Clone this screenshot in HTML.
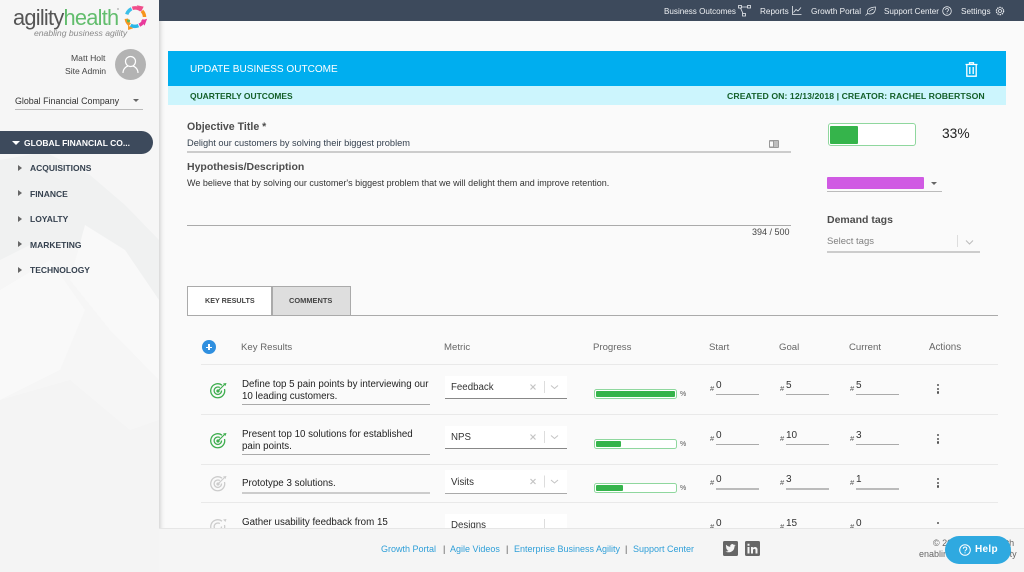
<!DOCTYPE html>
<html><head><meta charset="utf-8"><title>Update Business Outcome</title>
<style>
*{box-sizing:border-box}
html,body{margin:0;padding:0}
body{width:1024px;height:572px;overflow:hidden;position:relative;background:#fafafa;font-family:"Liberation Sans",sans-serif;color:#333}
.t{position:absolute;white-space:nowrap;line-height:1}
.a{position:absolute}
svg{position:absolute;overflow:visible}
.nav{font-size:8.2px;color:#eef0f3;top:7.5px}
.side{font-size:8.5px;font-weight:bold;color:#35414f;left:30px}
.tri{position:absolute;left:18px;width:0;height:0;border-left:4px solid #666;border-top:3.5px solid transparent;border-bottom:3.5px solid transparent}
.h{font-size:9.6px;color:#666;top:342.5px}
.sep{position:absolute;left:201px;width:797px;height:1px;background:#e9e9e9}
.kr{font-size:9.75px;color:#222;left:242px;line-height:12px;position:absolute;white-space:nowrap}
.ul{position:absolute;height:1px;background:#aaa}
.sel{position:absolute;left:445px;width:122px;background:#fff;border-bottom:1px solid #888}
.sel span{position:absolute;left:6px;font-size:9.7px;color:#333;white-space:nowrap;line-height:1}
.bar{position:absolute;left:594px;width:83px;height:9.5px;border:1px solid #8fd79e;border-radius:2.5px;background:#fff}
.bar i{position:absolute;left:1px;top:1px;bottom:1px;background:#35b44b;border-radius:1px}
.pc{font-size:7px;color:#555;left:680px}
.hash{font-size:7.5px;color:#555}
.num{font-size:10px;color:#333}
.dots{position:absolute;left:937px;width:3px}
.dots i{display:block;width:2.4px;height:2.4px;background:#555;border-radius:50%;margin-bottom:1.3px}
.fl{font-size:9px;color:#2f9fd8;top:545px}
.fs{font-size:9px;color:#555;top:545px}
</style></head><body>

<!-- Sidebar -->
<div class="a" style="left:0;top:0;width:159px;height:572px;background:#f6f6f6;box-shadow:1px 0 5px rgba(0,0,0,.2);overflow:hidden">
<svg width="159" height="572" style="left:0;top:0">
<polygon points="0,160 45,152 90,175 125,205 159,240 159,300 100,250 40,240 0,260" fill="#f0f1f1"/>
<polygon points="85,225 125,250 159,300 159,380 110,330 70,280" fill="#f9f9f9"/>
<polygon points="0,290 50,260 85,310 60,370 0,400" fill="#f9f9f9"/>
<polygon points="0,400 70,380 130,430 159,420 159,572 0,572" fill="#f4f4f4"/>
</svg>
</div>

<!-- Logo -->
<div class="t" style="left:13px;top:5.5px;font-size:21.8px;letter-spacing:-.75px;color:#555;line-height:24px">agility<span style="color:#62bd6d">health</span></div>
<div class="a" style="left:117px;top:8px;width:2px;height:2px;border-radius:50%;background:#bbb"></div>
<div class="t" style="left:34px;top:28.5px;font-size:8.6px;font-style:italic;color:#888">enabling business agility</div>
<svg width="26" height="26" viewBox="0 0 30 30" style="left:122px;top:4px" fill="none" stroke-width="4">
<path d="M5.5 12 A10.5 10.5 0 0 1 11 5.5" stroke="#3bbfe8"/>
<path d="M12 5 A10.5 10.5 0 0 1 22 7" stroke="#f04e8b"/>
<path d="M23 8 A10.5 10.5 0 0 1 26 15" stroke="#f7941d"/>
<path d="M25.5 18 A10.5 10.5 0 0 1 20 24.5" stroke="#e8399b"/>
<path d="M19 25 A10.5 10.5 0 0 1 10 24.5" stroke="#29b6e8"/>
<path d="M9 24 A10.5 10.5 0 0 1 5 17" stroke="#f7941d"/>
<polygon points="17,1.5 25,3 22,9" fill="#f04e8b" stroke="none"/>
<polygon points="22,19 29,17 26,25" fill="#e8399b" stroke="none"/>
<polygon points="7,25 13,28 7,30" fill="#f7941d" stroke="none"/>
<circle cx="7.5" cy="19.5" r="1.8" fill="#5cb85c" stroke="none"/>
</svg>

<div class="t" style="left:71px;top:54px;font-size:8.6px;color:#444">Matt Holt</div>
<div class="t" style="left:65px;top:67px;font-size:8.6px;color:#444">Site Admin</div>
<div class="a" style="left:115px;top:49px;width:31px;height:31px;border-radius:50%;background:#b3b3b3"></div>
<svg width="31" height="31" viewBox="0 0 31 31" style="left:115px;top:49px" fill="none" stroke="#fff" stroke-width="1.2"><circle cx="15.5" cy="12.5" r="5"/><path d="M8 24c0-4 3-6.500 5-7M23 24c0-4-3-6.500-5-7"/></svg>

<div class="t" style="left:15px;top:97px;font-size:8.9px;color:#333">Global Financial Company</div>
<div class="a" style="left:133px;top:99px;width:0;height:0;border-top:3.5px solid #666;border-left:3.500px solid transparent;border-right:3.500px solid transparent"></div>
<div class="a" style="left:15px;top:109px;width:128px;height:1px;background:#bbb"></div>

<div class="a" style="left:0;top:131px;width:153px;height:23px;background:#3d4a5c;border-radius:0 12px 12px 0"></div>
<div class="a" style="left:12px;top:141px;width:0;height:0;border-top:4px solid #fff;border-left:4px solid transparent;border-right:4px solid transparent"></div>
<div class="t" style="left:24px;top:138.500px;font-size:8.5px;font-weight:bold;color:#fff">GLOBAL FINANCIAL CO...</div>
<div class="tri" style="top:164.500px"></div><div class="t side" style="top:164px">ACQUISITIONS</div>
<div class="tri" style="top:190px"></div><div class="t side" style="top:189.500px">FINANCE</div>
<div class="tri" style="top:215.500px"></div><div class="t side" style="top:215px">LOYALTY</div>
<div class="tri" style="top:241px"></div><div class="t side" style="top:240.500px">MARKETING</div>
<div class="tri" style="top:266.500px"></div><div class="t side" style="top:266px">TECHNOLOGY</div>

<!-- Top bar -->
<div class="a" style="left:159px;top:0;width:865px;height:21px;background:#3d4a5c"></div>
<div class="t nav" style="left:664px;font-size:8.1px">Business Outcomes</div>
<svg width="13" height="12" viewBox="0 0 13 12" style="left:738px;top:5px" fill="none" stroke="#e8ebef" stroke-width=".8"><rect x=".5" y=".5" width="3" height="2.500"/><rect x="9.500" y=".5" width="3" height="2.500"/><rect x="4.500" y="8.500" width="3" height="2.500"/><path d="M3.500 2h6M2.500 3l2.500 5.500"/></svg>
<div class="t nav" style="left:760px">Reports</div>
<svg width="10" height="9" viewBox="0 0 10 9" style="left:792px;top:6px" fill="none" stroke="#e8ebef" stroke-width=".8"><path d="M.5 0v8.500h9M1.500 6.500l2.500-3 2 1.500 3-3.500"/></svg>
<div class="t nav" style="left:811px">Growth Portal</div>
<svg width="11" height="10" viewBox="0 0 11 10" style="left:865px;top:6px" fill="none" stroke="#e8ebef" stroke-width=".7"><path d="M.5 9.500L3 7M2.500 7C1.500 3 5 1.500 10.500 1c0 4-1.500 7-5 7-1.200 0-2.500-.3-3-1zM4 5.500c1.500-1.200 3-2 4.500-2.500"/></svg>
<div class="t nav" style="left:884px;font-size:8.1px">Support Center</div>
<svg width="10" height="10" viewBox="0 0 10 10" style="left:942px;top:6px" fill="none" stroke="#e8ebef" stroke-width=".8"><circle cx="5" cy="5" r="4.300"/><path d="M3.600 3.900c0-2 2.900-1.800 2.900 0 0 1.200-1.500 1.200-1.500 2.300M5 7v.8"/></svg>
<div class="t nav" style="left:961px">Settings</div>
<svg width="10" height="10" viewBox="0 0 10 10" style="left:995px;top:6px" fill="none" stroke="#e8ebef"><circle cx="5" cy="5" r="3.600" stroke-width="1.300" stroke-dasharray="1.500 .8"/><circle cx="5" cy="5" r="1.500" stroke-width=".8"/></svg>

<!-- Header -->
<div class="a" style="left:168px;top:51px;width:838px;height:35px;background:#00aeef"></div>
<div class="t" style="left:190px;top:64.500px;font-size:10.05px;color:#fff">UPDATE BUSINESS OUTCOME</div>
<svg width="13" height="15" viewBox="0 0 13 15" style="left:965px;top:61.500px" fill="none" stroke="#fff" stroke-width="1.300"><path d="M.5 2.500h12M4.500 2.500V.8h4v1.700M1.800 2.500v11.700h9.400V2.500M4.800 5v7M8.200 5v7"/></svg>
<div class="a" style="left:168px;top:86px;width:838px;height:19px;background:#ccf5fd"></div>
<div class="t" style="left:190px;top:91.500px;font-size:8.450px;font-weight:bold;color:#14602a">QUARTERLY OUTCOMES</div>
<div class="t" style="left:727px;top:91.500px;font-size:8.700px;font-weight:bold;color:#14602a;letter-spacing:.07px">CREATED ON: 12/13/2018 | CREATOR: RACHEL ROBERTSON</div>

<!-- Form -->
<div class="t" style="left:187px;top:122px;font-size:10.600px;font-weight:bold;color:#4d4d4d">Objective Title *</div>
<div class="t" style="left:187px;top:138.500px;font-size:9.280px;color:#35414f">Delight our customers by solving their biggest problem</div>
<svg width="10" height="8" viewBox="0 0 10 8" style="left:769px;top:139.500px"><rect width="10" height="8" rx="1" fill="#999"/><rect x="1" y="1.500" width="3" height="5" fill="#fafafa"/><path d="M5 2h4M5 4h4M5 6h4" stroke="#fafafa" stroke-width=".7"/></svg>
<div class="a" style="left:187px;top:151px;width:604px;height:1.500px;background:#ccc"></div>
<div class="t" style="left:187px;top:162px;font-size:10.500px;font-weight:bold;color:#4d4d4d">Hypothesis/Description</div>
<div class="t" style="left:187px;top:179px;font-size:9px;color:#333">We believe that by solving our customer's biggest problem that we will delight them and improve retention.</div>
<div class="a" style="left:187px;top:225px;width:604px;height:1px;background:#aaa"></div>
<div class="t" style="left:752px;top:228px;font-size:9px;color:#444">394 / 500</div>

<div class="a" style="left:828px;top:123px;width:88px;height:23px;border:1px solid #8fd79e;border-radius:3px;background:#fff"></div>
<div class="a" style="left:830px;top:125.500px;width:28px;height:18.500px;background:#35b44b;border-radius:1px"></div>
<div class="t" style="left:942px;top:127px;font-size:13.800px;color:#222">33%</div>
<div class="a" style="left:827px;top:177px;width:97px;height:12px;background:#d05ae3;border-radius:1px"></div>
<div class="a" style="left:931px;top:182px;width:0;height:0;border-top:3.500px solid #666;border-left:3.500px solid transparent;border-right:3.500px solid transparent"></div>
<div class="a" style="left:827px;top:191px;width:115px;height:1px;background:#bbb"></div>
<div class="t" style="left:827px;top:215px;font-size:10.500px;font-weight:bold;color:#4d4d4d">Demand tags</div>
<div class="t" style="left:827px;top:237px;font-size:9.500px;color:#808080">Select tags</div>
<div class="a" style="left:957px;top:235px;width:1px;height:12px;background:#ddd"></div>
<svg width="9" height="5" viewBox="0 0 9 5" style="left:965px;top:240px" fill="none" stroke="#bbb" stroke-width="1"><path d="M1 .5l3.500 3.500L8 .5"/></svg>
<div class="a" style="left:827px;top:251px;width:153px;height:1.500px;background:#ccc"></div>

<!-- Tabs -->
<div class="a" style="left:187px;top:315px;width:811px;height:1px;background:#aaa"></div>
<div class="a" style="left:187px;top:286px;width:85px;height:30px;background:#fff;border:1px solid #aaa"></div>
<div class="t" style="left:205px;top:297px;font-size:7.200px;font-weight:bold;color:#444">KEY RESULTS</div>
<div class="a" style="left:272px;top:286px;width:79px;height:30px;background:#dedede;border:1px solid #aaa"></div>
<div class="t" style="left:289px;top:297px;font-size:7.450px;font-weight:bold;color:#444">COMMENTS</div>

<!-- Table head -->
<div class="a" style="left:202px;top:340px;width:14px;height:14px;border-radius:50%;background:#2f8fdf"></div>
<div class="a" style="left:206px;top:346.500px;width:6px;height:1.300px;background:#fff"></div>
<div class="a" style="left:208.400px;top:344px;width:1.300px;height:6px;background:#fff"></div>
<div class="t h" style="left:241px">Key Results</div>
<div class="t h" style="left:444px">Metric</div>
<div class="t h" style="left:593px">Progress</div>
<div class="t h" style="left:709px">Start</div>
<div class="t h" style="left:779px">Goal</div>
<div class="t h" style="left:849px">Current</div>
<div class="t h" style="left:929px;font-size:9.800px">Actions</div>
<div class="sep" style="top:364px"></div>
<div class="sep" style="top:414px"></div>
<div class="sep" style="top:464px"></div>
<div class="sep" style="top:502px"></div>

<!-- Row 1 -->
<svg width="17" height="17" viewBox="0 0 17 17" style="left:210px;top:381.500px" fill="none" stroke="#3fae4f" stroke-width="1.300"><path d="M12 3.200A7 7 0 1 0 14.500 7"/><path d="M9.800 5.600A3.700 3.700 0 1 0 11.500 8.500"/><circle cx="8" cy="9" r="1" fill="#3fae4f"/><path d="M8 9l7-7" stroke-width="1.200"/><path d="M13 1.500l3.500-.5-1 3z" fill="#3fae4f" stroke="none"/></svg>
<div class="kr" style="top:378.500px">Define top 5 pain points by interviewing our<br>10 leading customers.</div>
<div class="ul" style="left:242px;top:404px;width:188px"></div>
<div class="sel" style="top:376px;height:23px"><span style="top:6.500px">Feedback</span></div>
<div class="bar" style="top:389px"><i style="width:79px"></i></div>
<div class="t pc" style="top:391px">%</div>

<!-- Row 2 -->
<svg width="17" height="17" viewBox="0 0 17 17" style="left:210px;top:431.500px" fill="none" stroke="#3fae4f" stroke-width="1.300"><path d="M12 3.200A7 7 0 1 0 14.500 7"/><path d="M9.800 5.600A3.700 3.700 0 1 0 11.500 8.500"/><circle cx="8" cy="9" r="1" fill="#3fae4f"/><path d="M8 9l7-7" stroke-width="1.200"/><path d="M13 1.500l3.500-.5-1 3z" fill="#3fae4f" stroke="none"/></svg>
<div class="kr" style="top:428.500px">Present top 10 solutions for established<br>pain points.</div>
<div class="ul" style="left:242px;top:454px;width:188px"></div>
<div class="sel" style="top:426px;height:23px"><span style="top:6.500px">NPS</span></div>
<div class="bar" style="top:439px"><i style="width:24.500px"></i></div>
<div class="t pc" style="top:441px">%</div>

<!-- Row 3 -->
<svg width="17" height="17" viewBox="0 0 17 17" style="left:210px;top:475px" fill="none" stroke="#ccc" stroke-width="1.300"><path d="M12 3.200A7 7 0 1 0 14.500 7"/><path d="M9.800 5.600A3.700 3.700 0 1 0 11.500 8.500"/><circle cx="8" cy="9" r="1" fill="#ccc"/><path d="M8 9l7-7" stroke-width="1.200"/><path d="M13 1.500l3.500-.5-1 3z" fill="#ccc" stroke="none"/></svg>
<div class="kr" style="top:478px">Prototype 3 solutions.</div>
<div class="ul" style="left:242px;top:492px;width:188px;height:1.500px;background:#ccc"></div>
<div class="sel" style="top:470px;height:24px;border-bottom:1.500px solid #aaa"><span style="top:7.500px">Visits</span></div>
<div class="bar" style="top:483px"><i style="width:27px"></i></div>
<div class="t pc" style="top:485px">%</div>

<!-- Row 4 -->
<svg width="17" height="17" viewBox="0 0 17 17" style="left:210px;top:518px" fill="none" stroke="#ccc" stroke-width="1.300"><path d="M12 3.200A7 7 0 1 0 14.500 7"/><path d="M9.800 5.600A3.700 3.700 0 1 0 11.500 8.500"/><path d="M13 1.500l3.500-.5-1 3z" fill="#ccc" stroke="none"/></svg>
<div class="kr" style="top:516.500px">Gather usability feedback from 15</div>
<div class="sel" style="top:514px;height:30px;border:0"><span style="top:7px">Designs</span></div>

<!-- X and chevrons for selects -->
<svg width="30" height="160" viewBox="0 0 30 160" style="left:528px;top:376px" fill="none" stroke-width="1">
<g><path d="M2.500 8.500l5 5M7.500 8.500l-5 5" stroke="#c4c4c4" stroke-width="1.200"/><path d="M16.500 5v12" stroke="#ddd"/><path d="M23 9.500l3.500 3 3.500-3" stroke="#c4c4c4"/></g>
<g transform="translate(0,50)"><path d="M2.500 8.500l5 5M7.500 8.500l-5 5" stroke="#c4c4c4" stroke-width="1.200"/><path d="M16.500 5v12" stroke="#ddd"/><path d="M23 9.500l3.500 3 3.500-3" stroke="#c4c4c4"/></g>
<g transform="translate(0,94.500)"><path d="M2.500 8.500l5 5M7.500 8.500l-5 5" stroke="#c4c4c4" stroke-width="1.200"/><path d="M16.500 5v12" stroke="#ddd"/><path d="M23 9.500l3.500 3 3.500-3" stroke="#c4c4c4"/></g>
<g transform="translate(0,138)"><path d="M16.500 5v12" stroke="#ddd"/></g>
</svg>

<!-- Numbers -->
<div class="t hash" style="left:710px;top:385px">#</div><div class="t num" style="left:716px;top:380.500px">0</div><div class="ul" style="left:716px;top:394px;width:43px"></div>
<div class="t hash" style="left:780px;top:385px">#</div><div class="t num" style="left:786px;top:380.500px">5</div><div class="ul" style="left:786px;top:394px;width:43px"></div>
<div class="t hash" style="left:850px;top:385px">#</div><div class="t num" style="left:856px;top:380.500px">5</div><div class="ul" style="left:856px;top:394px;width:43px"></div>
<div class="dots" style="top:384px"><i></i><i></i><i></i></div>

<div class="t hash" style="left:710px;top:435px">#</div><div class="t num" style="left:716px;top:430.500px">0</div><div class="ul" style="left:716px;top:444px;width:43px"></div>
<div class="t hash" style="left:780px;top:435px">#</div><div class="t num" style="left:786px;top:430.500px">10</div><div class="ul" style="left:786px;top:444px;width:43px"></div>
<div class="t hash" style="left:850px;top:435px">#</div><div class="t num" style="left:856px;top:430.500px">3</div><div class="ul" style="left:856px;top:444px;width:43px"></div>
<div class="dots" style="top:434px"><i></i><i></i><i></i></div>

<div class="t hash" style="left:710px;top:479px">#</div><div class="t num" style="left:716px;top:474.500px">0</div><div class="ul" style="left:716px;top:488px;width:43px;height:1.500px;background:#bbb"></div>
<div class="t hash" style="left:780px;top:479px">#</div><div class="t num" style="left:786px;top:474.500px">3</div><div class="ul" style="left:786px;top:488px;width:43px;height:1.500px;background:#bbb"></div>
<div class="t hash" style="left:850px;top:479px">#</div><div class="t num" style="left:856px;top:474.500px">1</div><div class="ul" style="left:856px;top:488px;width:43px;height:1.500px;background:#bbb"></div>
<div class="dots" style="top:478px"><i></i><i></i><i></i></div>

<div class="t num" style="left:716px;top:518.500px">0</div>
<div class="t num" style="left:786px;top:518.500px">15</div>
<div class="t num" style="left:856px;top:518.500px">0</div>
<div class="t hash" style="left:710px;top:523px">#</div>
<div class="t hash" style="left:780px;top:523px">#</div>
<div class="t hash" style="left:850px;top:523px">#</div>
<div class="dots" style="top:522px"><i></i></div>

<!-- Footer -->
<div class="a" style="left:159px;top:528px;width:865px;height:44px;background:#f5f5f5;border-top:1px solid #e6e6e6"></div>
<div class="t fl" style="left:381px">Growth Portal</div>
<div class="t fs" style="left:443px">|</div>
<div class="t fl" style="left:450px">Agile Videos</div>
<div class="t fs" style="left:506px">|</div>
<div class="t fl" style="left:514px">Enterprise Business Agility</div>
<div class="t fs" style="left:625px">|</div>
<div class="t fl" style="left:633px">Support Center</div>
<svg width="15" height="15" viewBox="0 0 15 15" style="left:723px;top:541px"><rect width="15" height="15" rx="1.500" fill="#666"/><path d="M12.500 4.300c-.4.200-.8.300-1.200.3.400-.3.700-.6.900-1.100-.4.200-.8.400-1.300.5a2 2 0 0 0-3.500 1.900C5.700 5.800 4.200 5 3.200 3.800c-.6 1-.3 2.100.6 2.700-.3 0-.6-.1-.9-.2 0 1 .7 1.800 1.600 2-.3.100-.6.100-.9 0 .3.800 1 1.400 1.900 1.400-.9.700-2 1-3 .8 2.900 1.800 8.900.8 9-5.100.4-.3.700-.6 1-.9z" fill="#f5f5f5"/></svg>
<svg width="15" height="15" viewBox="0 0 15 15" style="left:745px;top:541px"><rect width="15" height="15" rx="1.500" fill="#666"/><path d="M2.500 6h2v6.500h-2zM2.500 2.700h2v2h-2zM6 6h1.900v1c.9-1.500 4.600-1.700 4.600 1.500v4h-2V9c0-1.600-2.500-1.600-2.500.2v3.300H6z" fill="#f5f5f5"/></svg>
<div class="t" style="left:933px;top:539px;font-size:9px;color:#666">© 2019 AgilityHealth</div>
<div class="t" style="left:919px;top:550px;font-size:9px;color:#666">enabling business agility</div>
<div class="a" style="left:945px;top:536px;width:66px;height:28px;border-radius:14px;background:#2fa9e0"></div>
<svg width="12" height="12" viewBox="0 0 12 12" style="left:959px;top:544px" fill="none" stroke="#fff" stroke-width="1"><circle cx="6" cy="6" r="5.300"/><path d="M4.300 4.700c0-2.300 3.500-2.100 3.500 0 0 1.300-1.800 1.300-1.800 2.700M6 8.300v1"/></svg>
<div class="t" style="left:975px;top:545px;font-size:10px;font-weight:bold;color:#fff;letter-spacing:.3px">Help</div>
</body></html>
